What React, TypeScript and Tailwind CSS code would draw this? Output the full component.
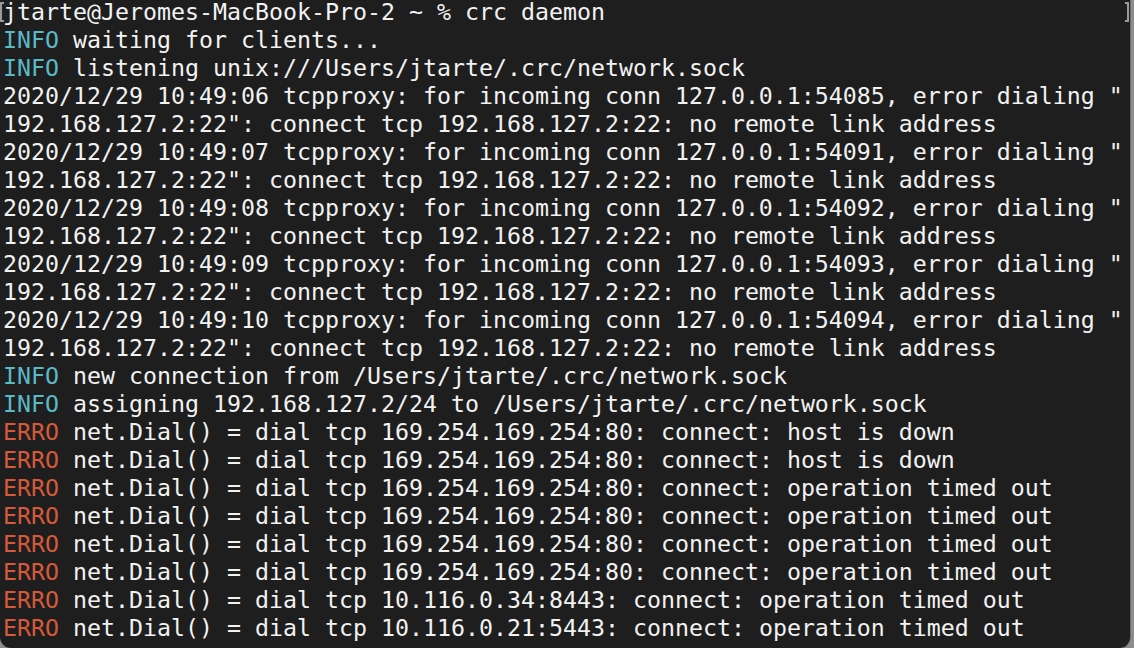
type Seg = { t: string; c?: "info" | "erro" };

const dialErr = (i: string, p: string): Seg[][] => [
  [{ t: `2020/12/29 10:49:${i} tcpproxy: for incoming conn 127.0.0.1:${p}, error dialing "` }],
  [{ t: `192.168.127.2:22": connect tcp 192.168.127.2:22: no remote link address` }],
];

const erro = (rest: string): Seg[] => [{ t: "ERRO", c: "erro" }, { t: ` ${rest}` }];

const lines: Seg[][] = [
  [{ t: "jtarte@Jeromes-MacBook-Pro-2 ~ % crc daemon" }],
  [{ t: "INFO", c: "info" }, { t: " waiting for clients..." }],
  [{ t: "INFO", c: "info" }, { t: " listening unix:///Users/jtarte/.crc/network.sock" }],
  ...dialErr("06", "54085"),
  ...dialErr("07", "54091"),
  ...dialErr("08", "54092"),
  ...dialErr("09", "54093"),
  ...dialErr("10", "54094"),
  [{ t: "INFO", c: "info" }, { t: " new connection from /Users/jtarte/.crc/network.sock" }],
  [{ t: "INFO", c: "info" }, { t: " assigning 192.168.127.2/24 to /Users/jtarte/.crc/network.sock" }],
  erro("net.Dial() = dial tcp 169.254.169.254:80: connect: host is down"),
  erro("net.Dial() = dial tcp 169.254.169.254:80: connect: host is down"),
  erro("net.Dial() = dial tcp 169.254.169.254:80: connect: operation timed out"),
  erro("net.Dial() = dial tcp 169.254.169.254:80: connect: operation timed out"),
  erro("net.Dial() = dial tcp 169.254.169.254:80: connect: operation timed out"),
  erro("net.Dial() = dial tcp 169.254.169.254:80: connect: operation timed out"),
  erro("net.Dial() = dial tcp 10.116.0.34:8443: connect: operation timed out"),
  erro("net.Dial() = dial tcp 10.116.0.21:5443: connect: operation timed out"),
];

export default function App() {
  return (
    <div className="w-[1134px] h-[648px] bg-[#8c8c8c] overflow-hidden">
      <div className="relative w-[1131px] h-[648px] bg-[#1e1e1e] rounded-b-[11px] border-r border-[#6a6a6a] overflow-hidden">
        {/* mark brackets */}
        <span className="absolute left-0 top-[2px] w-[4px] h-[20px] border-l-2 border-t-2 border-b-2 border-[#9a9a9a]" />
        <span className="absolute right-[1px] top-[2px] w-[4px] h-[20px] border-r-2 border-t-2 border-b-2 border-[#9a9a9a]" />
        <div
          className="-mt-[2px] pl-[3px] text-[#f2f2f2] whitespace-pre"
          style={{ fontFamily: '"DejaVu Sans Mono", "Liberation Mono", monospace' }}
        >
          {lines.map((segs, i) => (
            <div key={i} className="h-[28px] leading-[28px] text-[23.25px]">
              {segs.map((s, j) => (
                <span
                  key={j}
                  className={
                    s.c === "info" ? "text-[#5bb8c6]" : s.c === "erro" ? "text-[#d5593a]" : undefined
                  }
                >
                  {s.t}
                </span>
              ))}
            </div>
          ))}
        </div>
      </div>
    </div>
  );
}
